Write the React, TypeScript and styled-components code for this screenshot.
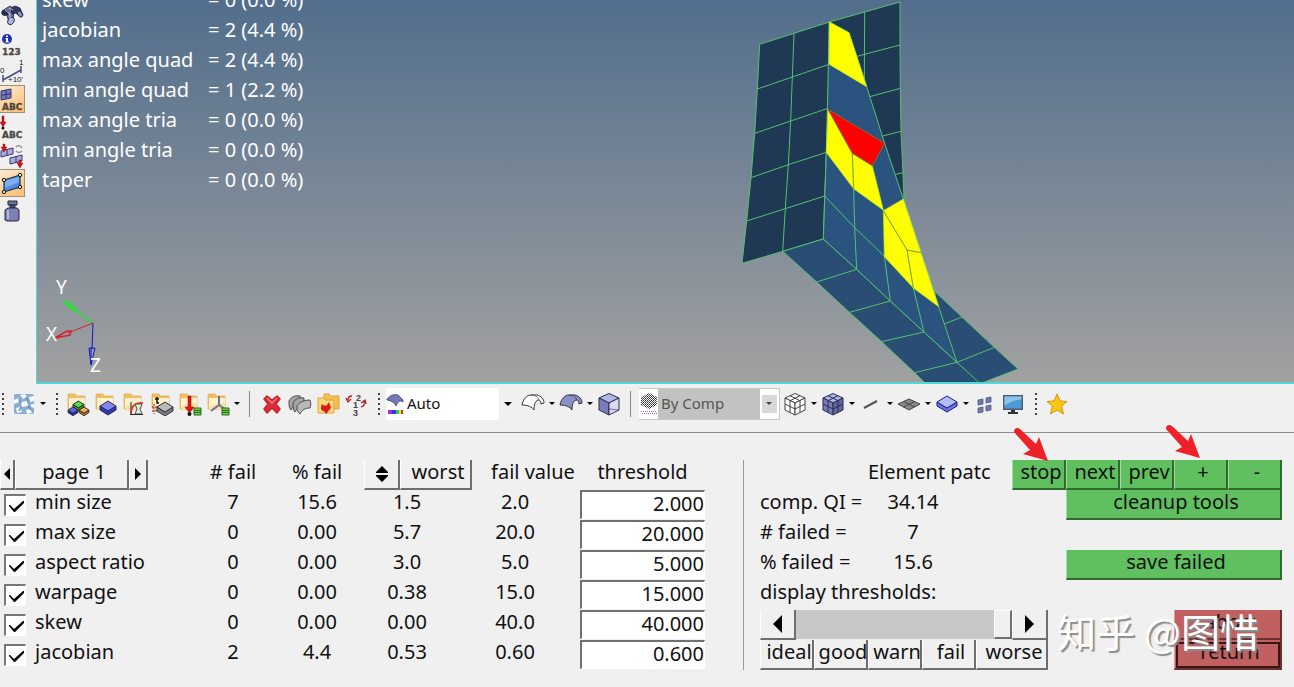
import React, { useState } from "react";
import styled, { createGlobalStyle, css } from "styled-components";

const GlobalStyle = createGlobalStyle`
  *, *::before, *::after { box-sizing: border-box; }
  body {
    margin: 0;
    background: #f0f0f0;
    color: #111;
    font-family: "Noto Sans", "Noto Sans CJK SC", sans-serif;
    font-size: 20px;
    line-height: 24px;
  }
  button, input, select { font: inherit; color: inherit; margin: 0; }
`;

/* ---------- page frame ---------- */

const Page = styled.div`
  display: flex;
  flex-direction: column;
  min-height: 100vh;
`;

const Workspace = styled.div`
  display: flex;
  flex: 1 1 384px;
`;

const Sidebar = styled.nav`
  display: flex;
  flex-direction: column;
  width: 36px;
  flex: none;
  padding-top: 1px;
`;

const SideButton = styled.button<{ $active?: boolean }>`
  width: 25px;
  height: 28px;
  padding: 0;
  border: 1px solid transparent;
  border-left: 0;
  background: none;
  ${(p) =>
    p.$active &&
    css`
      border-color: #a09070;
      background: linear-gradient(150deg, #fdebd2, #f9bd72);
    `}
  svg {
    display: block;
  }
`;

const Viewport = styled.main`
  position: relative;
  flex: 1;
  overflow: hidden;
  border-left: 1px solid #4fd8d8;
  border-bottom: 2px solid #4fd8d8;
  background: linear-gradient(#526e8c, #a1a1a1);
`;

const Scene = styled.svg`
  position: absolute;
  inset: 0;
  width: 100%;
  height: 100%;
`;

const Report = styled.dl`
  position: relative;
  display: grid;
  grid-template-columns: 166px 1fr;
  grid-auto-rows: 30px;
  margin: -15px 0 0;
  padding-left: 5px;
  line-height: 30px;
  color: #fff;
  dt,
  dd {
    margin: 0;
  }
`;

/* ---------- toolbar ---------- */

const Toolbar = styled.div`
  display: flex;
  align-items: center;
  height: 49px;
  padding-bottom: 9px;
  border-bottom: 1px solid #8c8c8c;
`;

const ToolButton = styled.button`
  width: 28px;
  height: 28px;
  flex: none;
  padding: 2px;
  border: 0;
  background: none;
  svg {
    display: block;
  }
`;

const Caret = styled.button`
  width: 10px;
  height: 28px;
  flex: none;
  padding: 0 2px;
  border: 0;
  background: none;
  &::after {
    content: "";
    display: block;
    border: 3px solid transparent;
    border-top-color: #000;
    border-bottom: 0;
  }
`;

const Handle = styled.span<{ $first?: boolean }>`
  display: flex;
  justify-content: flex-end;
  width: ${(p) => (p.$first ? 10 : 16)}px;
  padding-right: 6px;
  flex: none;
  &::after {
    content: "";
    width: 2px;
    height: 22px;
    background: repeating-linear-gradient(#444 0 2px, transparent 2px 5px);
  }
`;

const Divider = styled.span`
  width: 16px;
  height: 26px;
  flex: none;
  background: linear-gradient(#888, #888) 7px 0 / 1px 100% no-repeat;
`;

const Picker = styled.label<{ $wide?: boolean; $off?: boolean }>`
  position: relative;
  display: flex;
  align-items: center;
  width: ${(p) => (p.$wide ? 141 : 132)}px;
  height: 32px;
  flex: none;
  margin-right: 1px;
  background: #fff;
  svg {
    flex: none;
  }
  select {
    flex: 1;
    min-width: 0;
    height: 32px;
    padding: 0 20px 2px 1px;
    border: 0;
    appearance: none;
    background: #fff;
    font-size: 15px;
    line-height: 20px;
    opacity: 1;
  }
  &::after {
    content: "";
    position: absolute;
    right: 0;
    top: 0;
    width: 19px;
    height: 32px;
    background: #f0f0f0;
  }
  ${(p) =>
    p.$off &&
    css`
      border: 1px solid #c8c8c8;
      border-left: 0;
      select {
        height: 30px;
        padding-left: 3px;
        background: #c2c2c2;
        color: #555;
      }
      &::after {
        height: 30px;
        border: 1px solid #fff;
        border-width: 6px 2px;
        background: #d8d8d8;
      }
    `}
`;

const PickerArrow = styled.span<{ $small?: boolean }>`
  position: absolute;
  z-index: 1;
  right: ${(p) => (p.$small ? 7 : 6)}px;
  top: 50%;
  margin-top: -2px;
  border: ${(p) => (p.$small ? 3 : 4)}px solid transparent;
  border-top-color: ${(p) => (p.$small ? "#444" : "#000")};
  border-bottom: 0;
  pointer-events: none;
`;

/* ---------- lower panel ---------- */

const Panel = styled.section`
  display: grid;
  grid-template-columns: 744fr 550fr;
  padding: 27px 0 17px;
`;

const Criteria = styled.div`
  padding-right: 38px;
  border-right: 1px solid #999;
`;

const Table = styled.table`
  width: 100%;
  table-layout: fixed;
  border-collapse: collapse;
  th,
  td {
    height: 30px;
    padding: 0;
    font-weight: 400;
    text-align: center;
    vertical-align: top;
    white-space: nowrap;
  }
`;

const PercentCell = styled.td`
  && {
    padding-left: 12px;
  }
`;

const FailCell = styled.td`
  && {
    padding-right: 22px;
  }
`;

const FailHead = styled.th`
  && {
    padding-left: 14px;
  }
`;

const Group = styled.div<{ $end?: boolean }>`
  display: flex;
  justify-content: ${(p) => (p.$end ? "flex-end" : "flex-start")};
`;

const tones = {
  plain: { face: "#f0f0f0", light: "#fff", dark: "#6e6e6e" },
  green: { face: "#60c060", light: "#a0dca0", dark: "#2f6a2f" },
  red: { face: "#c06060", light: "#d89a9a", dark: "#6c3030" },
};

const PanelButton = styled.button<{ $tone?: keyof typeof tones; $w?: number; $focused?: boolean }>`
  display: flex;
  justify-content: center;
  width: ${(p) => (p.$w ? `${p.$w}px` : "100%")};
  height: 30px;
  padding: 0 0 0 5px;
  border: 1px solid ${(p) => tones[p.$tone || "plain"].light};
  border-top-width: 0;
  border-right: 2px solid ${(p) => tones[p.$tone || "plain"].dark};
  border-bottom: 2px solid ${(p) => tones[p.$tone || "plain"].dark};
  background: ${(p) => tones[p.$tone || "plain"].face};
  white-space: nowrap;
  ${(p) =>
    p.$focused &&
    css`
      outline: 2px solid #3a1414;
      outline-offset: -4px;
    `}
`;

const ArrowButton = styled(PanelButton)`
  align-items: center;
  padding: 0;
`;

const CheckLabel = styled.label`
  display: flex;
  align-items: flex-start;
  gap: 9px;
  padding-left: 4px;
`;

const CheckBox = styled.input`
  appearance: none;
  width: 22px;
  height: 22px;
  flex: none;
  && {
    margin-top: 4px;
  }
  border: 1px solid #fff;
  border-top: 2px solid #777;
  border-left: 2px solid #777;
  background: #fff;
  &:checked::after {
    content: "";
    display: block;
    width: 15px;
    height: 12px;
    margin: 4px 0 0 3px;
    background: #000;
    clip-path: polygon(0 5px, 1px 5px, 5px 9px, 14px 1px, 15px 1px, 15px 3px, 6px 12px, 5px 12px, 0 6px);
  }
`;

const Threshold = styled.input`
  display: block;
  width: 125px;
  height: 29px;
  margin: 0 0 0 auto;
  padding: 0 0 3px;
  border: 1px solid #fff;
  border-top: 2px solid #707070;
  border-left: 2px solid #707070;
  background: #fff;
  text-align: right;
`;

const Summary = styled.div`
  position: relative;
  display: grid;
  grid-template-columns: repeat(29, 1fr);
  grid-auto-rows: 30px;
  padding: 0 12px 0 16px;
`;

const Cell = styled.div<{ $col: number; $span: number; $row: number; $center?: boolean }>`
  position: relative;
  grid-column: ${(p) => p.$col} / span ${(p) => p.$span};
  grid-row: ${(p) => p.$row};
  text-align: ${(p) => (p.$center ? "center" : "left")};
  white-space: nowrap;
`;

const Range = styled.input`
  display: block;
  appearance: none;
  width: 100%;
  height: 29px;
  background: #c8c8c8;
  &::-webkit-slider-thumb {
    appearance: none;
    width: 18px;
    height: 29px;
    border: 1px solid #fff;
    border-right: 2px solid #6e6e6e;
    border-bottom: 2px solid #6e6e6e;
    background: #f0f0f0;
  }
`;

const Pointer = styled.svg<{ $high?: boolean }>`
  position: absolute;
  left: ${(p) => (p.$high ? -9 : 1)}px;
  bottom: ${(p) => (p.$high ? 32 : 29)}px;
  pointer-events: none;
`;

const Watermark = styled.div`
  position: absolute;
  right: 35px;
  bottom: 18px;
  font-family: "Noto Sans CJK SC", sans-serif;
  font-size: 39px;
  line-height: 44px;
  color: #fff;
  text-shadow: 2px 2px 1px #8c8c8c;
  white-space: nowrap;
  pointer-events: none;
`;

/* ---------- icons ---------- */

const Icon = ({ children, w = 24, h = 24 }: { children: React.ReactNode; w?: number; h?: number }) => (
  <svg width={w} height={h} viewBox={`0 0 ${w} ${h}`} aria-hidden="true">
    {children}
  </svg>
);

const Folder = () => (
  <>
    <path d="M2 2h7l1.500 2H19v13H2z" fill="#f1bf62" stroke="#dfae58" strokeWidth=".7" />
    <path d="M3 6h16v11H3z" fill="#fbdf9d" />
    <path d="M3 6h16v5C13 10 8 12 3 16z" fill="#fff1cd" />
  </>
);

const Brick = ({ x, y, s = 1, top, side }: { x: number; y: number; s?: number; top: string; side: string }) => (
  <g transform={`translate(${x} ${y}) scale(${s})`} stroke="#223" strokeWidth={0.9 / s} strokeLinejoin="round">
    <path d="M0 5v4l8 5 8-5V5l-8 5z" fill={side} />
    <path d="M0 5l8-5 8 5-8 5z" fill={top} />
  </g>
);

const Cube = ({ grid, filled }: { grid?: boolean; filled?: boolean }) => (
  <g stroke={filled ? "#2c2c50" : "#444"} strokeWidth="1" strokeLinejoin="round">
    <path d="M12 1.500l10 4.500-10 5L2 6z" fill={filled ? "#b4b6e6" : "#fff"} />
    <path d="M2 6l10 5v12L2 18z" fill={filled ? "#7a7cb8" : "#fff"} />
    <path d="M22 6l-10 5v12l10-5z" fill={filled ? (grid ? "#6264a0" : "#dcdcf0") : "#fff"} />
    {grid && <path d="M7 3.700l10 5v11.800M17 3.700l-10 5v11.800M2 12l10 5 10-5" fill="none" />}
    {filled && !grid && <path d="M12 17l10 1" fill="none" strokeWidth=".6" />}
  </g>
);

const Shell = ({ fill }: { fill: string }) => (
  <g stroke="#333" strokeWidth="1" strokeLinejoin="round">
    <path d="M1 13C2 7 6 3 10 3h6c4 1 7 4 7 8l-3 1c0-3-1-4-3-4-3 1-4 5-4 10-2-3-6-5-12-5z" fill={fill} />
    <path d="M10 3c4 0 7 2 8 5" fill="none" strokeWidth=".6" />
  </g>
);

const Abc = ({ y, children }: { y: number; children: string }) => (
  <text x="2" y={y} fontSize="9" fontWeight="700" fontFamily="DejaVu Sans, sans-serif" fill="#4c4640" stroke="#4c4640" strokeWidth=".3">
    {children}
  </text>
);

const RedDown = ({ x, y, h }: { x: number; y: number; h: number }) => (
  <path d={`M${x - 1} ${y}h2v${h - 5}h2l-3 5-3-5h2z`} fill="#d0101c" stroke="#900" strokeWidth=".4" />
);

const sideTools: { label: string; active?: boolean; art: React.ReactNode }[] = [
  {
    label: "Find",
    art: (
      <g stroke="#1c1c38" strokeWidth=".8">
        <path d="M2 9l8-5 4 3-1 13-4 1-2-8-5-1z" fill="#6a6ea6" />
        <path d="M11 6l4-2 5 2 3 7-3 2-4-4-4 1z" fill="#34375e" />
        <ellipse cx="5" cy="11" rx="3" ry="2.500" fill="#2b2d52" />
        <ellipse cx="11" cy="19" rx="3" ry="4" transform="rotate(35 11 19)" fill="#aeb4e0" />
        <ellipse cx="20" cy="12" rx="2" ry="3.500" transform="rotate(-35 20 12)" fill="#8f93c8" />
        <path d="M9 6l4 2M5 8l5 4M10 12v5" stroke="#e4e6ff" />
      </g>
    ),
  },
  {
    label: "Numbers",
    art: (
      <>
        <circle cx="7" cy="9" r="5" fill="#2230b8" />
        <path d="M6 5.500h2v1.500H6zM5.500 8H8v3.500h1v1H5.500v-1H6V9h-.5z" fill="#fff" />
        <Abc y={25}>123</Abc>
      </>
    ),
  },
  {
    label: "Scale",
    art: (
      <>
        <path d="M3 24V17M3 22L21 12M21 8v7" stroke="#4a4a86" strokeWidth="1.500" fill="none" />
        <g fontSize="8" fontFamily="Liberation Sans, sans-serif" fill="#222">
          <text x="0" y="15">0</text>
          <text x="19" y="7">1</text>
          <text x="8" y="24">+10'</text>
        </g>
      </>
    ),
  },
  {
    label: "Element labels",
    active: true,
    art: (
      <>
        <path d="M1 5l10-2v9L1 14z" fill="#7478c0" stroke="#35386e" />
        <path d="M6 4v9M1 9.500l10-2" stroke="#35386e" />
        <Abc y={24}>ABC</Abc>
      </>
    ),
  },
  {
    label: "Load labels",
    art: (
      <>
        <RedDown x={3} y={2} h={11} />
        <circle cx="3" cy="14" r="1.500" fill="#111" />
        <Abc y={24}>ABC</Abc>
      </>
    ),
  },
  {
    label: "Transfer loads",
    art: (
      <>
        <path d="M1 9l12-3v6L1 15zM10 16l12-3v6l-12 3z" fill="#a9abd8" stroke="#35386e" />
        <path d="M7 7.500v6M16 14.500v6" stroke="#35386e" />
        <RedDown x={4} y={2} h={8} />
        <RedDown x={20} y={18} h={8} />
        <path d="M16 5c2-2 4-2 6 1M22 9c-2 2-4 2-6 0" stroke="#8a938a" strokeWidth="1.500" fill="none" />
      </>
    ),
  },
  {
    label: "Element handles",
    active: true,
    art: (
      <>
        <path d="M4 10l16-5v12L4 22z" fill="#4f8ae0" stroke="#234" strokeWidth="1.200" />
        <path d="M5 11l14-4v5L5 18z" fill="#9cc6fa" opacity=".6" />
        <g fill="#dfe9c8" stroke="#111">
          <circle cx="4" cy="10" r="1.700" />
          <circle cx="20" cy="5" r="1.700" />
          <circle cx="20" cy="17" r="1.700" />
          <circle cx="4" cy="22" r="1.700" />
        </g>
      </>
    ),
  },
  {
    label: "Mass",
    art: (
      <g stroke="#26263e">
        <path d="M8 3h9v4H8z" fill="#6d6fa0" />
        <path d="M10 7h5v3h-5z" fill="#50527e" />
        <path d="M8 10h9l2 2v10l-2 1H7l-2-1V12z" fill="#7d80b4" />
        <path d="M8 12v9" stroke="#b5b7da" strokeWidth="2" />
      </g>
    ),
  },
];

const maskIcon = (
  <>
    <rect x="2" y="2" width="20" height="20" rx="2" fill="#8badd2" />
    <path d="M8 3l5-1 2 3-4 2zM17 5l5-1v5l-4 1zM2 8l4-2 1 4-5 2zM9 10l6-1 1 5-6 1zM4 16l4-1 2 5-5 1zM14 18l4-1 2 4-5 1zM19 12l3 0v4l-3-1z" fill="#f5fafd" />
    <path d="M14 5l3 5M7 9l3 1M16 14l3 4M9 15l-2 4" stroke="#6d92bf" strokeWidth="1.500" fill="none" />
  </>
);

const folderTools: { label: string; art: React.ReactNode }[] = [
  {
    label: "Assemblies",
    art: (
      <>
        <Folder />
        <Brick x={7} y={9} s={0.68} top="#4fe04f" side="#22a022" />
        <Brick x={2} y={15} s={0.62} top="#5a66ee" side="#2a30b0" />
        <Brick x={13} y={15} s={0.62} top="#f7b048" side="#c07818" />
      </>
    ),
  },
  { label: "Components", art: (<><Folder /><Brick x={6} y={9} top="#7b86f4" side="#3038c0" /></>) },
  {
    label: "Curves",
    art: (
      <>
        <Folder />
        <path d="M9 23V10" stroke="#222" fill="none" />
        <path d="M9 23c0-9 4-13 12-12" stroke="#d22" strokeWidth="1.500" fill="none" />
        <path d="M13 12h7l-2 5 2 5h-7l2-5z" fill="#e6e6d8" stroke="#555" />
        <path d="M8 22.500h13" stroke="#222" />
      </>
    ),
  },
  {
    label: "Properties",
    art: (
      <>
        <Folder />
        <path d="M7 5v6h2M5 7h4" stroke="#111" strokeWidth="1.500" fill="none" />
        <path d="M4 12v10M2 15h5M2 19h5" stroke="#a22" strokeDasharray="2 1" />
        <Brick x={7} y={10} top="#b9b9b9" side="#7e7e7e" />
      </>
    ),
  },
  {
    label: "Load collectors",
    art: (
      <>
        <Folder />
        <path d="M10 4h3v11h3l-4.500 6L7 15h3z" fill="#e01414" stroke="#a00" strokeWidth=".5" />
        <circle cx="11.500" cy="22" r="2" fill="#111" />
        <path d="M16 16h7v7h-7z" fill="#6fce4a" stroke="#2c6a1c" />
        <path d="M16 18.500h7M16 20.500h7" stroke="#2c6a1c" />
      </>
    ),
  },
  {
    label: "System collectors",
    art: (
      <>
        <Folder />
        <path d="M13 13V4M13 13l-8 6M13 13l7 5" stroke="#6a74a0" strokeWidth="2" />
        <path d="M16 16h7v7h-7z" fill="#6fce4a" stroke="#2c6a1c" />
        <path d="M16 18.500h7M16 20.500h7" stroke="#2c6a1c" />
      </>
    ),
  },
];

const editTools: { label: string; art: React.ReactNode }[] = [
  {
    label: "Delete",
    art: (
      <>
        <path
          d="M4 7l3-3 5 4 5-4 3 3-4 5 4 5-3 4-5-5-5 5-3-4 4-5z"
          fill="#dc2c38"
          stroke="#c42430"
          strokeWidth="1.500"
          strokeLinejoin="round"
        />
        <path d="M7 6l5 5 5-5" stroke="#f07a7c" strokeWidth="1.500" fill="none" />
      </>
    ),
  },
  {
    label: "Card edit",
    art: (
      <g fill="#a4a4a4" stroke="#4c4c4c">
        <path d="M1 9c2-4 6-6 11-5v9c-4 0-7 1-9 5-2-2-2-5-2-9z" />
        <path d="M5 11c2-4 6-6 11-5v9c-4 0-7 1-9 5-2-2-2-5-2-9z" />
        <path d="M9 14c2-4 8-6 13-6 1 3 1 6 0 8-5 0-8 2-10 6-3-2-3-5-3-8z" fill="#b8b8b8" />
      </g>
    ),
  },
  {
    label: "Organize",
    art: (
      <>
        <path d="M8 2h5l1 2h9v13H8z" fill="#f3c04e" stroke="#d9a544" />
        <path d="M2 6h6l1 2h9v13H2z" fill="#fbd878" stroke="#d9a544" />
        <path d="M6 12c2 2 4 2 5 1l2-3 2 6-5 6-2-3c-3 0-4-3-2-7z" fill="#d81c1c" />
      </>
    ),
  },
  {
    label: "Renumber",
    art: (
      <>
        <g fontSize="9" fontWeight="700" fontFamily="Liberation Sans, sans-serif" fill="#444">
          <text x="12" y="9">2</text>
          <text x="9" y="16">1</text>
          <text x="9" y="24">3</text>
        </g>
        <path d="M8 4c-3 0-4 1-4 4M2 6l2 4 3-3M17 15c3-1 4-2 3-6M17 11l4-3 1 4" stroke="#c01824" strokeWidth="1.300" fill="none" />
      </>
    ),
  },
];

const viewTools: { label: string; menu?: boolean; art: React.ReactNode }[] = [
  { label: "Wireframe elements", menu: true, art: <Cube grid /> },
  { label: "Shaded elements", menu: true, art: <Cube grid filled /> },
  { label: "1D elements", menu: true, art: <path d="M5 16l13-7" stroke="#555" strokeWidth="2" /> },
  {
    label: "2D elements",
    menu: true,
    art: (
      <g fill="#888" stroke="#444">
        <path d="M1 12l11-5 11 5-11 6z" />
        <path d="M6.500 9.500l11 5.500M17.500 9.500l-11 5.500" fill="none" />
      </g>
    ),
  },
  {
    label: "3D elements",
    menu: true,
    art: (
      <g stroke="#1a1f80" strokeLinejoin="round">
        <path d="M2 10v4l10 6 10-6v-4l-10 6z" fill="#6a74e8" />
        <path d="M2 10l10-6 10 6-10 6z" fill="#b4bcf8" />
      </g>
    ),
  },
  {
    label: "Shrink",
    art: (
      <g fill="#7478b4" stroke="#44487c" strokeWidth=".7">
        <path d="M5 8l5-1v5l-5 1zM13 6l5-1v5l-5 1zM5 16l5-1v5l-5 1zM13 14l5-1v5l-5 1z" />
      </g>
    ),
  },
  {
    label: "Display options",
    art: (
      <>
        <path d="M2 3h20v15H2z" fill="#4f5d6c" />
        <path d="M3.500 4.500h17v12h-17z" fill="#4c9ad6" />
        <path d="M3.500 4.500h17v3c-7 0-12 3-17 6z" fill="#8cc4ec" />
        <path d="M10 18h4v2h3v2H7v-2h3z" fill="#333" />
      </>
    ),
  },
];

/* ---------- model ---------- */

const Model = () => (
  <Scene viewBox="37 0 1257 382" preserveAspectRatio="xMidYMid slice" role="img" aria-label="Element quality model">
    <g transform="translate(720) scale(.3333333)" strokeLinejoin="round">
      <g stroke="#55c070" strokeWidth="3">
        <path d="M328 66L540 6 540 135 541 265 543 394 549 518 552 600 440 600z" fill="#1f3853" />
        <path d="M434 36L433 240M405 171L433 163 540 135M445 291L541 265M488 408L543 394M524 524L549 518" fill="none" />
        <path d="M119 133L328 66 327 193 324 325 319 457 314 588 310 717 188 754 66 790 80 663 93 533 104 400 112 267z" fill="#1f3853" />
        <path d="M222 101L217 231 212 363 205 494 196 626 188 754M112 267L217 231 327 193M104 400L212 363 324 325M93 533L205 494 319 457M80 663L196 626 314 588" fill="none" />
        <path d="M645 875L726 951 823 1042 894 1107 778 1152 711 1087 640 980z" fill="#2a4d74" />
        <path d="M188 754L310 717 410 808 511 903 612 996 711 1087 782 1152 618 1152 584 1118 485 1025 388 937 290 846z" fill="#2a4d74" />
        <path d="M670 973L726 951M711 1087L823 1042M290 846L410 808M388 937L511 903M485 1025L612 996M584 1118L711 1087" fill="none" />
        <path d="M328 66L387 98 440 260 494 430 550 597 603 758 656 920 711 1087 612 996 511 903 410 808 310 717 319 457z" fill="#2a547f" />
        <path d="M314 588L404 683 493 768M401 566L404 683 410 808M493 768L511 903M580 864L612 996M319 457L401 566 490 630" fill="none" />
      </g>
      <g fill="#ff0" stroke="#b4e82c" strokeWidth="2">
        <path d="M328 66L387 98 440 260 327 193z" />
        <path d="M324 328L397 460 401 566 319 457z" />
        <path d="M397 460L457 497 490 630 401 566z" />
        <path d="M490 632L550 597 603 758 561 750z" />
        <path d="M490 632L561 750 580 864 493 770z" />
        <path d="M561 750L603 758 656 920 580 864z" />
      </g>
      <path d="M397 460L401 566M490 632L561 750 580 864M561 750L603 758" stroke="#7ea030" strokeWidth="3" fill="none" />
      <path d="M324 328L494 430 457 497 397 460z" fill="#f00" stroke="#8a6a30" strokeWidth="3" />
    </g>
    <g strokeWidth="1">
      <path d="M93 323L78 312" stroke="#3fd04a" strokeWidth="2" />
      <path d="M62 300l7 1 10 9-3 3-9-6z" fill="#3fd04a" />
      <path d="M93 323L68 333" stroke="#d0242c" />
      <path d="M55 338l12-7 4 0-1 4z" stroke="#d0242c" strokeWidth="1.500" fill="none" />
      <path d="M93 323L92 349M89 348h6l-4 17zM91 348v16" stroke="#1414c8" fill="none" />
    </g>
    <g fontSize="19" fill="#fff">
      <text x="56" y="294">Y</text>
      <text x="46" y="341">X</text>
      <text x="90" y="372">Z</text>
    </g>
  </Scene>
);

const report = [
  ["skew", "0 (0.0 %)"],
  ["jacobian", "2 (4.4 %)"],
  ["max angle quad", "2 (4.4 %)"],
  ["min angle quad", "1 (2.2 %)"],
  ["max angle tria", "0 (0.0 %)"],
  ["min angle tria", "0 (0.0 %)"],
  ["taper", "0 (0.0 %)"],
];

const criteria = [
  ["min size", "7", "15.6", "1.5", "2.0", "2.000"],
  ["max size", "0", "0.00", "5.7", "20.0", "20.000"],
  ["aspect ratio", "0", "0.00", "3.0", "5.0", "5.000"],
  ["warpage", "0", "0.00", "0.38", "15.0", "15.000"],
  ["skew", "0", "0.00", "0.00", "40.0", "40.000"],
  ["jacobian", "2", "4.4", "0.53", "0.60", "0.600"],
];

const columnWidths = [186, 94, 62, 130, 108, 125];

const stats = [
  ["comp. QI =", "34.14"],
  ["# failed =", "7"],
  ["% failed =", "15.6"],
];

const RedPointer = ({ high }: { high?: boolean }) => (
  <Pointer $high={high} width="36" height="36" viewBox="0 0 36 36" aria-hidden="true">
    <path d="M1 7C1 3 4 2 7 4L23 19 26 12 35 36 10 29 17 25z" fill="#ee2028" />
  </Pointer>
);

const Tool = ({ label, art }: { label: string; art: React.ReactNode }) => (
  <ToolButton aria-label={label}>
    <Icon>{art}</Icon>
  </ToolButton>
);

export default function App() {
  const [level, setLevel] = useState(100);
  return (
    <Page>
      <GlobalStyle />
      <Workspace>
        <Sidebar aria-label="Display tools">
          {sideTools.map((t) => (
            <SideButton key={t.label} aria-label={t.label} $active={t.active}>
              <Icon w={24} h={26}>{t.art}</Icon>
            </SideButton>
          ))}
        </Sidebar>
        <Viewport>
          <Model />
          <Report>
            {report.map(([name, value]) => (
              <React.Fragment key={name}>
                <dt>{name}</dt>
                <dd>= {value}</dd>
              </React.Fragment>
            ))}
          </Report>
        </Viewport>
      </Workspace>

      <Toolbar role="toolbar">
        <Handle $first />
        <Tool label="Mask" art={maskIcon} />
        <Caret aria-label="Mask menu" />
        <Handle />
        {folderTools.map((t) => (
          <Tool key={t.label} {...t} />
        ))}
        <Caret aria-label="Collector menu" />
        <Divider />
        {editTools.map((t) => (
          <Tool key={t.label} {...t} />
        ))}
        <Handle />
        <Picker>
          <Icon w={20} h={24}>
            <path d="M1 7c3-4 7-5 11-4l5 5v2c-3-2-5-1-7 4-1-3-4-5-9-6z" fill="#7478b4" stroke="#3c3f6c" strokeWidth=".8" />
            <rect x="2" y="18" width="4" height="4" fill="#c020d0" />
            <rect x="6" y="18" width="4" height="4" fill="#2040e0" />
            <rect x="10" y="18" width="3" height="4" fill="#30d060" />
            <rect x="13" y="18" width="2" height="4" fill="#e8e030" />
            <rect x="15" y="18" width="2" height="4" fill="#e03020" />
          </Icon>
          <select aria-label="Geometry color mode">
            <option>Auto</option>
          </select>
          <PickerArrow />
        </Picker>
        <Tool label="Wireframe geometry" art={<Shell fill="#fff" />} />
        <Caret aria-label="Wireframe geometry menu" />
        <Tool label="Shaded geometry" art={<Shell fill="#8a90c8" />} />
        <Caret aria-label="Shaded geometry menu" />
        <Tool label="Transparency" art={<Cube filled />} />
        <Divider />
        <Picker $wide $off>
          <Icon w={19} h={24}>
            <defs>
              <pattern id="dither" width="2" height="2" patternUnits="userSpaceOnUse">
                <rect width="1" height="1" fill="#333" />
                <rect x="1" y="1" width="1" height="1" fill="#555" />
              </pattern>
            </defs>
            <path d="M10 1l8 4v8l-8 4-8-4V5z" fill="url(#dither)" />
            <path d="M2 19.500h16M3 21.500h15" stroke="#a070a0" strokeDasharray="1 1" />
          </Icon>
          <select aria-label="Element color mode" disabled>
            <option>By Comp</option>
          </select>
          <PickerArrow $small />
        </Picker>
        {viewTools.map((t) => (
          <React.Fragment key={t.label}>
            <Tool label={t.label} art={t.art} />
            {t.menu && <Caret aria-label={`${t.label} menu`} />}
          </React.Fragment>
        ))}
        <Handle />
        <Tool
          label="Favorites"
          art={
            <path
              d="M12 2l3 7 7 .5-5.500 4.500 2 8L12 18l-6.500 4 2-8L2 9.500 9 9z"
              fill="#fbc614"
              stroke="#d0940c"
              strokeLinejoin="round"
            />
          }
        />
      </Toolbar>

      <Panel>
        <Criteria>
          <Table>
            <colgroup>
              {columnWidths.map((w, i) => (
                <col key={i} width={w} />
              ))}
            </colgroup>
            <thead>
              <tr>
                <th>
                  <Group>
                    <ArrowButton $w={15} aria-label="Previous page">
                      <Icon w={8} h={12}><path d="M7 0v12L1 6z" /></Icon>
                    </ArrowButton>
                    <PanelButton $w={114}>page 1</PanelButton>
                    <ArrowButton $w={19} aria-label="Next page">
                      <Icon w={8} h={12}><path d="M1 0v12l6-6z" /></Icon>
                    </ArrowButton>
                  </Group>
                </th>
                <th># fail</th>
                <PercentCell as="th">% fail</PercentCell>
                <th>
                  <Group $end>
                    <ArrowButton $w={36} aria-label="Sort order">
                      <Icon w={12} h={16}><path d="M6 0l6 6v1H0V6zM0 9h12v1l-6 6-6-6z" /></Icon>
                    </ArrowButton>
                    <PanelButton $w={72}>worst</PanelButton>
                  </Group>
                </th>
                <FailHead>fail value</FailHead>
                <th>threshold</th>
              </tr>
            </thead>
            <tbody>
              {criteria.map(([name, count, percent, worst, fail, limit]) => (
                <tr key={name}>
                  <td>
                    <CheckLabel>
                      <CheckBox type="checkbox" defaultChecked />
                      {name}
                    </CheckLabel>
                  </td>
                  <td>{count}</td>
                  <PercentCell>{percent}</PercentCell>
                  <td>{worst}</td>
                  <FailCell>{fail}</FailCell>
                  <td>
                    <Threshold aria-label={`${name} threshold`} defaultValue={limit} />
                  </td>
                </tr>
              ))}
            </tbody>
          </Table>
        </Criteria>

        <Summary>
          <Cell $col={7} $span={8} $row={1}>Element patc</Cell>
          {["stop", "next", "prev", "+", "-"].map((name, i) => (
            <Cell key={name} $col={15 + i * 3} $span={3} $row={1}>
              <PanelButton $tone="green">{name}</PanelButton>
              {(name === "stop" || name === "+") && <RedPointer high={name === "+"} />}
            </Cell>
          ))}
          {stats.map(([name, value], i) => (
            <React.Fragment key={name}>
              <Cell $col={1} $span={6} $row={i + 2}>{name}</Cell>
              <Cell $col={7} $span={5} $row={i + 2} $center>{value}</Cell>
            </React.Fragment>
          ))}
          <Cell $col={18} $span={12} $row={2}>
            <PanelButton $tone="green">cleanup tools</PanelButton>
          </Cell>
          <Cell $col={18} $span={12} $row={4}>
            <PanelButton $tone="green">save failed</PanelButton>
          </Cell>
          <Cell $col={1} $span={12} $row={5}>display thresholds:</Cell>
          <Cell $col={1} $span={2} $row={6}>
            <ArrowButton aria-label="Lower threshold">
              <Icon w={9} h={18}><path d="M9 0v18L0 9z" /></Icon>
            </ArrowButton>
          </Cell>
          <Cell $col={3} $span={12} $row={6}>
            <Range
              type="range"
              aria-label="display thresholds"
              value={level}
              onChange={(e) => setLevel(Number(e.target.value))}
            />
          </Cell>
          <Cell $col={15} $span={2} $row={6}>
            <ArrowButton aria-label="Raise threshold">
              <Icon w={9} h={18}><path d="M0 0v18l9-9z" /></Icon>
            </ArrowButton>
          </Cell>
          <Cell $col={24} $span={6} $row={6}>
            <PanelButton $tone="red">abort</PanelButton>
          </Cell>
          {["ideal", "good", "warn", "fail", "worse"].map((name, i) => (
            <Cell key={name} $col={1 + i * 3} $span={name === "worse" ? 4 : 3} $row={7}>
              <PanelButton>{name}</PanelButton>
            </Cell>
          ))}
          <Cell $col={24} $span={6} $row={7}>
            <PanelButton $tone="red" $focused>return</PanelButton>
          </Cell>
          <Watermark>知乎 @图惜</Watermark>
        </Summary>
      </Panel>
    </Page>
  );
}
